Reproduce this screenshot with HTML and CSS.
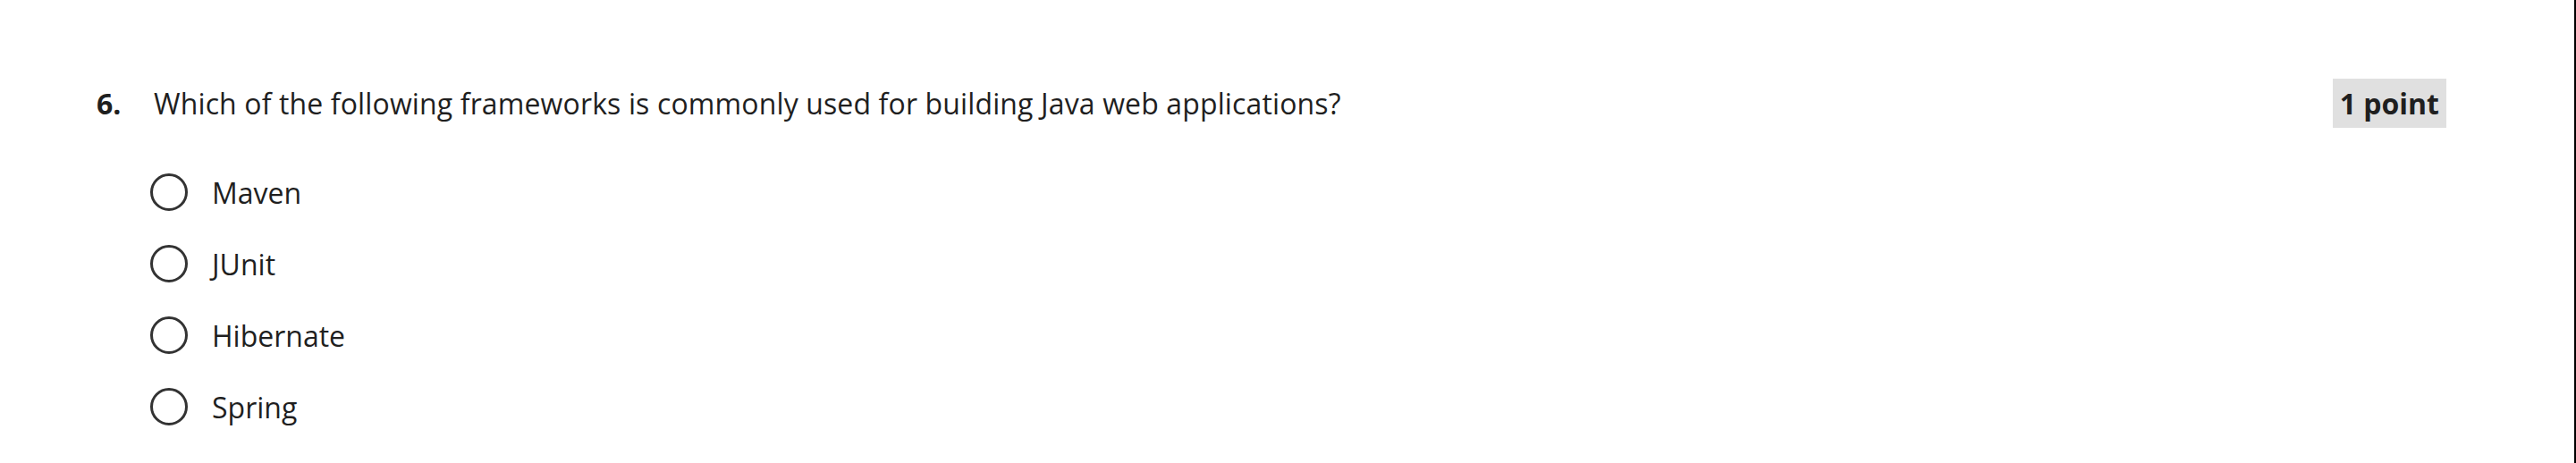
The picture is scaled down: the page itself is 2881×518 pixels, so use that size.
FILE: index.html
```html
<!DOCTYPE html>
<html lang="en">
<head>
<meta charset="utf-8">
<title>Question 6</title>
<link rel="stylesheet" href="styles.css">
</head>
<body>
<div class="page">
  <div class="q-header">
    <div class="q-num">6.</div>
    <div class="q-text">Which of the following frameworks is commonly used for building Java web applications?</div>
    <div class="points">1 point</div>
  </div>
  <div class="options">
    <label class="option"><span class="radio"></span><span class="opt-text">Maven</span></label>
    <label class="option"><span class="radio"></span><span class="opt-text">JUnit</span></label>
    <label class="option"><span class="radio"></span><span class="opt-text">Hibernate</span></label>
    <label class="option"><span class="radio"></span><span class="opt-text">Spring</span></label>
  </div>
</div>
</body>
</html>
```

FILE: styles.css
```css
html, body {
  margin: 0;
  padding: 0;
  background: #ffffff;
}

body {
  font-family: "Open Sans", "Noto Sans", sans-serif;
  font-size: 32px;
  color: #1f1f1f;
}

.page {
  box-sizing: border-box;
  width: 2881px;
  height: 518px;
  border-right: 2px solid #000000;
  padding: 88px 143px 0 108px;
}

.q-header {
  display: flex;
  align-items: center;
  height: 55px;
}

.q-num {
  width: 64px;
  flex: none;
  font-weight: 700;
}

.q-text {
  flex: 1;
  letter-spacing: 0.13px;
}

.points {
  flex: none;
  display: flex;
  align-items: center;
  height: 55px;
  padding: 0 8px;
  background: #e0e0e0;
  font-weight: 700;
}

.options {
  margin-top: 32px;
  padding-left: 60px;
}

.option {
  display: flex;
  align-items: center;
  height: 80px;
  gap: 27px;
}

.radio {
  box-sizing: border-box;
  width: 42px;
  height: 42px;
  border: 3px solid #333333;
  border-radius: 50%;
  flex: none;
}

.opt-text {
  color: #1f1f1f;
}
```
